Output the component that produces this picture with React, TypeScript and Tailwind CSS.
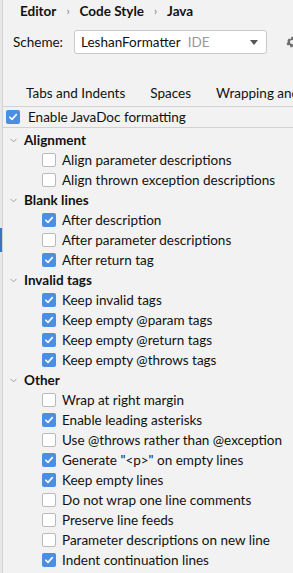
import { ChevronDown } from "lucide-react"

type Item = { label: string; checked: boolean }
type Group = { title: string; items: Item[] }

const groups: Group[] = [
  {
    title: "Alignment",
    items: [
      { label: "Align parameter descriptions", checked: false },
      { label: "Align thrown exception descriptions", checked: false },
    ],
  },
  {
    title: "Blank lines",
    items: [
      { label: "After description", checked: true },
      { label: "After parameter descriptions", checked: false },
      { label: "After return tag", checked: true },
    ],
  },
  {
    title: "Invalid tags",
    items: [
      { label: "Keep invalid tags", checked: true },
      { label: "Keep empty @param tags", checked: true },
      { label: "Keep empty @return tags", checked: true },
      { label: "Keep empty @throws tags", checked: true },
    ],
  },
  {
    title: "Other",
    items: [
      { label: "Wrap at right margin", checked: false },
      { label: "Enable leading asterisks", checked: true },
      { label: "Use @throws rather than @exception", checked: false },
      { label: 'Generate "<p>" on empty lines', checked: true },
      { label: "Keep empty lines", checked: true },
      { label: "Do not wrap one line comments", checked: false },
      { label: "Preserve line feeds", checked: false },
      { label: "Parameter descriptions on new line", checked: false },
      { label: "Indent continuation lines", checked: true },
    ],
  },
]

function Box({ checked }: { checked: boolean }) {
  if (checked) {
    return (
      <span className="flex items-center justify-center w-[14px] h-[14px] rounded-[2px] bg-[#4a8fe1] shrink-0">
        <svg width="10" height="10" viewBox="0 0 10 10">
          <path d="M1.8 5.2 L4 7.4 L8.3 2.6" fill="none" stroke="#fff" strokeWidth="1.6" strokeLinecap="round" strokeLinejoin="round" />
        </svg>
      </span>
    )
  }
  return <span className="w-[14px] h-[14px] rounded-[2px] bg-white border border-[#b9b9b9] shrink-0" />
}

export default function App() {
  return (
    <div className="w-[293px] h-[573px] bg-[#f2f2f2] overflow-hidden flex text-[13.5px] text-[#111]" style={{ fontFamily: "Lato, 'Noto Sans', sans-serif" }}>
      {/* edge of the settings tree */}
      <div className="w-[3px] shrink-0 flex flex-col bg-[#e8e8e8] border-r border-[#d4d4d4]">
        <div className="h-[228px]" />
        <div className="h-[24px] bg-[#3a73c4]" />
      </div>

      <div className="flex-1 flex flex-col min-w-0">
        <div className="h-[23px] flex items-center pl-[17px] gap-[10px] font-bold whitespace-nowrap">
          <span>Editor</span>
          <span className="text-[#777] font-normal text-[11px]">›</span>
          <span>Code Style</span>
          <span className="text-[#777] font-normal text-[11px]">›</span>
          <span>Java</span>
        </div>

        <div className="h-[38px] flex items-center pl-[10px] whitespace-nowrap overflow-hidden">
          <span className="w-[61px] shrink-0">Scheme:</span>
          <div className="w-[193px] h-[24px] shrink-0 bg-white border border-[#c9c9c9] rounded-[3px] flex items-center pl-[6px] pr-[8px]">
            <span>LeshanFormatter</span>
            <span className="ml-[7px] text-[#999]">IDE</span>
            <span className="ml-auto w-0 h-0 border-l-[4px] border-r-[4px] border-t-[5px] border-l-transparent border-r-transparent border-t-[#555]" />
          </div>
          <svg className="ml-[18px] shrink-0" width="14" height="14" viewBox="0 0 24 24">
            <path fill="#6e6e6e" d="M19.4 13a7.5 7.5 0 0 0 0-2l2.1-1.6-2-3.5-2.5 1a7.6 7.6 0 0 0-1.7-1l-.4-2.7h-4l-.4 2.7a7.6 7.6 0 0 0-1.7 1l-2.5-1-2 3.5L4.6 11a7.5 7.5 0 0 0 0 2l-2.1 1.6 2 3.5 2.5-1a7.6 7.6 0 0 0 1.7 1l.4 2.7h4l.4-2.7a7.6 7.6 0 0 0 1.7-1l2.5 1 2-3.5zM12 15.5a3.5 3.5 0 1 1 0-7 3.5 3.5 0 0 1 0 7z" />
          </svg>
        </div>

        <div className="h-[46px] flex items-end border-b border-[#d1d1d1] whitespace-nowrap overflow-hidden">
          <div className="flex items-center h-[26px] gap-[25px] pl-[23px]">
            <span>Tabs and Indents</span>
            <span>Spaces</span>
            <span>Wrapping and</span>
          </div>
        </div>

        <div className="h-[21px] flex items-center gap-[8px] pl-[3px] border-b border-[#d1d1d1] whitespace-nowrap">
          <Box checked />
          <span>Enable JavaDoc formatting</span>
        </div>

        <div className="pt-[2px] flex flex-col whitespace-nowrap">
          {groups.map((g) => (
            <div key={g.title} className="flex flex-col">
              <div className="h-[20px] flex items-center">
                <ChevronDown className="w-[11px] h-[11px] ml-[5px] mr-[5px] text-[#999]" strokeWidth={2} />
                <span className="font-bold">{g.title}</span>
              </div>
              {g.items.map((it) => (
                <div key={it.label} className="h-[20px] flex items-center gap-[6px] pl-[39px]">
                  <Box checked={it.checked} />
                  <span>{it.label}</span>
                </div>
              ))}
            </div>
          ))}
        </div>
      </div>
    </div>
  )
}
